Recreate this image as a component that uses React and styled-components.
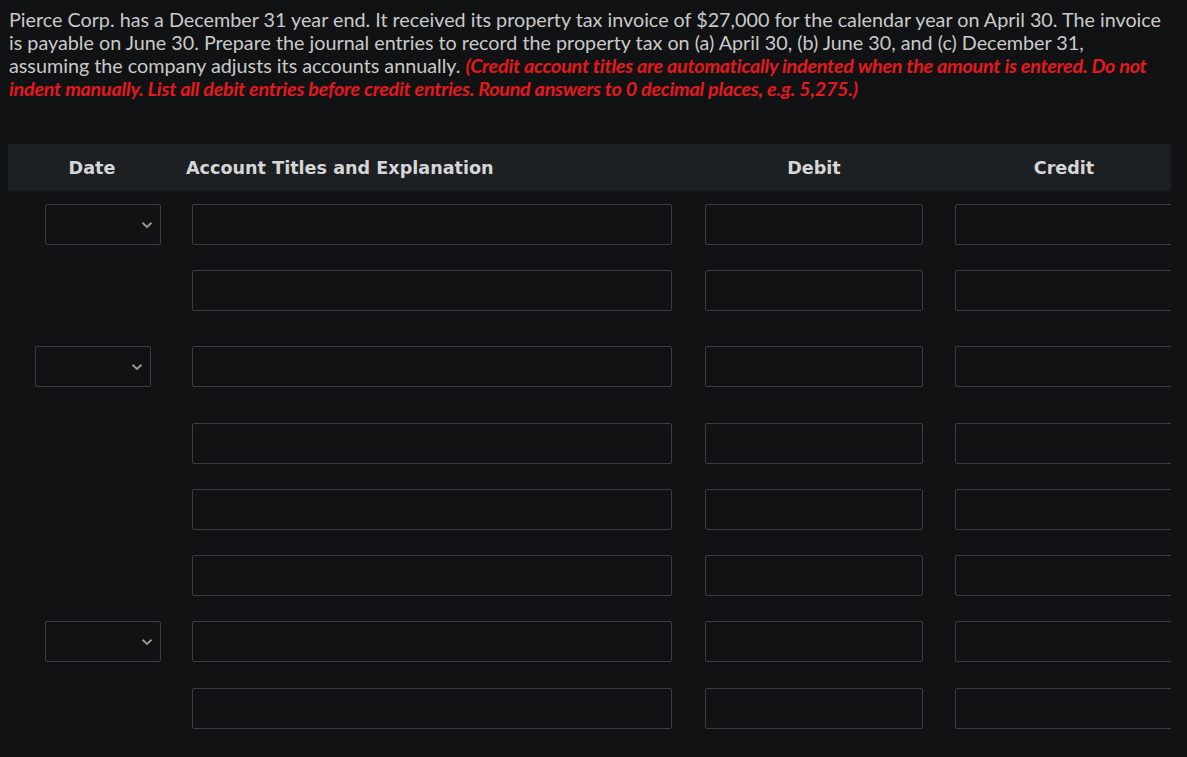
import React from "react";
import styled, { createGlobalStyle } from "styled-components";

const GlobalStyle = createGlobalStyle`
  html, body {
    background: #111214;
  }
  body {
    margin: 8px;
    font-family: Lato, "Open Sans", sans-serif;
    color: #c9c9c9;
  }
`;

const columns = "168px 513px 250px 232px";

const rows = [
  { date: true, dateOffset: 37, gap: 13 },
  { gap: 25 },
  { date: true, dateOffset: 27, gap: 35 },
  { gap: 36 },
  { gap: 25 },
  { gap: 25 },
  { date: true, dateOffset: 37, gap: 25 },
  { gap: 26 },
];

const Prompt = styled.p`
  margin: 0;
  padding: 0 12px 0 1px;
  font-size: 19.75px;
  line-height: 23px;
`;

const Note = styled.span`
  color: #e3191c;
  font-weight: 700;
  font-style: italic;
  letter-spacing: -0.25px;
`;

const Table = styled.div`
  margin-top: 44px;
  width: 1163px;
  overflow: hidden;
`;

const HeaderRow = styled.div`
  display: grid;
  grid-template-columns: ${columns};
  height: 47px;
  align-items: center;
  background: #1d2023;
  font-family: "DejaVu Sans", Verdana, sans-serif;
  font-weight: 700;
  font-size: 17.6px;
  color: #d6d6d6;
`;

const HeadCell = styled.div`
  text-align: ${(p) => (p.$left ? "left" : "center")};
  padding-left: ${(p) => p.$pad || 0}px;
  width: ${(p) => (p.$w ? `${p.$w}px` : "auto")};
`;

const Row = styled.div`
  display: grid;
  grid-template-columns: ${columns};
  margin-top: ${(p) => p.$gap}px;
  height: 41px;
`;

const Field = styled.div`
  box-sizing: border-box;
  height: 41px;
  border: 1px solid #3b3d40;
  border-radius: 2px;
  background: #111214;
`;

const DateSelect = styled(Field)`
  width: 116px;
  margin-left: ${(p) => p.$offset}px;
  display: flex;
  align-items: center;
  justify-content: flex-end;
  padding-right: 7px;
`;

const AccountInput = styled(Field)`
  width: 480px;
  margin-left: 16px;
`;

const AmountInput = styled(Field)`
  width: 218px;
  margin-left: 16px;
`;

const Chevron = () => (
  <svg width="12" height="8" viewBox="0 0 12 8">
    <path d="M1.5 1.8 L6 6 L10.5 1.8" fill="none" stroke="#9b968f" strokeWidth="2" />
  </svg>
);

export default function App() {
  return (
    <>
      <GlobalStyle />
      <Prompt>
        Pierce Corp. has a December 31 year end. It received its property tax invoice of $27,000 for the
        calendar year on April 30. The invoice is payable on June 30. Prepare the journal entries to record
        the property tax on (a) April 30, (b) June 30, and (c) December 31, assuming the company adjusts its
        accounts annually.{" "}
        <Note>
          (Credit account titles are automatically indented when the amount is entered. Do not indent
          manually. List all debit entries before credit entries. Round answers to 0 decimal places, e.g.
          5,275.)
        </Note>
      </Prompt>
      <Table>
        <HeaderRow>
          <HeadCell>Date</HeadCell>
          <HeadCell $left $pad={10}>
            Account Titles and Explanation
          </HeadCell>
          <HeadCell $pad={16} $w={218}>
            Debit
          </HeadCell>
          <HeadCell $pad={16} $w={218}>
            Credit
          </HeadCell>
        </HeaderRow>
        {rows.map((r, i) => (
          <Row key={i} $gap={r.gap}>
            <div>
              {r.date && (
                <DateSelect $offset={r.dateOffset}>
                  <Chevron />
                </DateSelect>
              )}
            </div>
            <AccountInput />
            <AmountInput />
            <AmountInput />
          </Row>
        ))}
      </Table>
    </>
  );
}
